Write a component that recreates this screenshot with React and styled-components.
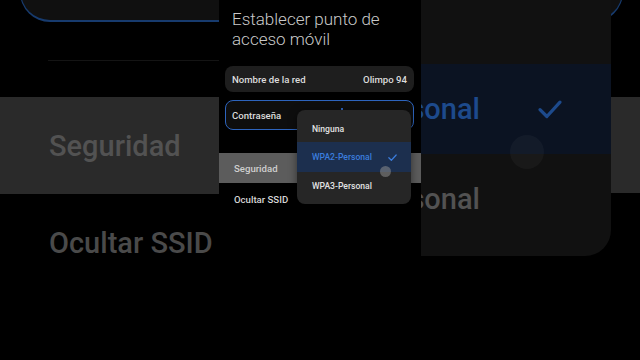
import React from 'react';
import styled, { createGlobalStyle } from 'styled-components';

const GlobalStyle = createGlobalStyle`
  html, body {
    margin: 0;
    padding: 0;
    background: #000;
  }
  body {
    font-family: Roboto, 'Noto Sans', sans-serif;
  }
`;

function Check({ size = 12, color = '#3b7ddd', stroke = 2 }) {
  return (
    <svg width={size} height={size} viewBox='0 0 24 24' fill='none'>
      <path
        d='M4 12.5l5.5 5.5L20 6.5'
        stroke={color}
        strokeWidth={stroke}
        strokeLinecap='round'
        strokeLinejoin='round'
      />
    </svg>
  );
}

const securityOptions = [
  { label: 'Ninguna', pos: 'first' },
  { label: 'WPA2-Personal', selected: true },
  { label: 'WPA3-Personal', pos: 'last' },
];

function App() {
  return (
    <>
      <GlobalStyle />
      <Page>
        {/* left: zoomed copy of the screen behind */}
        <Side>
          <OutlineLeft />
          <Divider />
          <BigBand>
            <BigLabel>Seguridad</BigLabel>
          </BigBand>
          <BigRow>
            <BigLabel $dim>Ocultar SSID</BigLabel>
          </BigRow>
        </Side>

        {/* center: the actual phone screen */}
        <Screen>
          <Title>
            Establecer punto de
            <br />
            acceso móvil
          </Title>
          <Field>
            <span>Nombre de la red</span>
            <span>Olimpo 94</span>
          </Field>
          <Field $active>
            <span>Contraseña</span>
            <Caret />
          </Field>
          <SettingRow $pressed>Seguridad</SettingRow>
          <SettingRow>Ocultar SSID</SettingRow>

          <Menu>
            {securityOptions.map((opt) => (
              <MenuItem key={opt.label} $selected={opt.selected} $pos={opt.pos}>
                <span>{opt.label}</span>
                {opt.selected && <Check size={11} stroke={2.6} />}
              </MenuItem>
            ))}
            <Touch />
          </Menu>
        </Screen>

        {/* right: zoomed copy of the dropdown */}
        <Side>
          <RightWrap>
            <ZoomMenu>
              <ZoomItem $selected>
                <Clip>
                  <ZoomText $selected>WPA2-Personal</ZoomText>
                </Clip>
                <ZoomCheck>
                  <Check size={30} color='#1d4a8c' stroke={2.6} />
                </ZoomCheck>
              </ZoomItem>
              <ZoomItem>
                <Clip>
                  <ZoomText>WPA3-Personal</ZoomText>
                </Clip>
              </ZoomItem>
              <BigTouch />
            </ZoomMenu>
            <Edge>
              <OutlineRight />
              <EdgeBand />
            </Edge>
          </RightWrap>
        </Side>
      </Page>
    </>
  );
}

const Page = styled.div`
  width: 640px;
  height: 360px;
  display: grid;
  grid-template-columns: 219px 202px 219px;
  background: #000;
  overflow: hidden;
`;

const Side = styled.div`
  display: flex;
  flex-direction: column;
  overflow: hidden;
  min-width: 0;
`;

const OutlineLeft = styled.div`
  margin: -20px -20px 0 20px;
  height: 40px;
  flex-shrink: 0;
  background: #101010;
  border-left: 1.5px solid #173b6e;
  border-bottom: 2px solid #173b6e;
  border-bottom-left-radius: 30px;
`;

const Divider = styled.div`
  margin: 38px 0 0 48px;
  height: 1px;
  background: #141414;
`;

const BigBand = styled.div`
  margin-top: 36px;
  height: 97px;
  background: #2a2a2a;
  display: flex;
  align-items: center;
  padding-left: 49px;
`;

const BigRow = styled.div`
  height: 98px;
  display: flex;
  align-items: center;
  padding-left: 49px;
`;

const BigLabel = styled.span`
  font-size: 29px;
  font-weight: 500;
  color: ${(p) => (p.$dim ? '#4a4a4a' : '#525252')};
  white-space: nowrap;
`;

const Screen = styled.div`
  position: relative;
  background: #000;
  display: flex;
  flex-direction: column;
`;

const Title = styled.div`
  margin: 9px 0 0 13px;
  font-size: 17px;
  line-height: 20px;
  font-weight: 300;
  color: #c9c9c9;
`;

const Field = styled.div`
  position: relative;
  margin: ${(p) => (p.$active ? '8px' : '17px')} 7px 0 6px;
  height: ${(p) => (p.$active ? '30px' : '26px')};
  box-sizing: border-box;
  display: flex;
  align-items: center;
  justify-content: space-between;
  padding: 0 ${(p) => (p.$active ? '6px' : '7px')};
  border-radius: 8px;
  background: ${(p) => (p.$active ? '#0e0e0e' : '#1e1e1e')};
  border: ${(p) => (p.$active ? '1.5px solid #2d64bd' : 'none')};
  font-size: 9.6px;
  font-weight: 500;
  color: #dcdcdc;
`;

const Caret = styled.div`
  position: absolute;
  left: 115px;
  top: 7px;
  width: 1.5px;
  height: 4px;
  background: #2d64bd;
`;

const SettingRow = styled.div`
  margin-top: ${(p) => (p.$pressed ? '23px' : '0')};
  height: ${(p) => (p.$pressed ? '30px' : '32px')};
  display: flex;
  align-items: center;
  padding-left: 15px;
  background: ${(p) => (p.$pressed ? '#5c5c5c' : 'transparent')};
  font-size: 9.6px;
  font-weight: 500;
  color: ${(p) => (p.$pressed ? '#cfcfcf' : '#d6d6d6')};
`;

const Menu = styled.div`
  position: absolute;
  left: 78px;
  top: 110px;
  width: 114px;
  padding: 6px 0 4px;
  box-sizing: border-box;
  background: #262626;
  border-radius: 8px;
  box-shadow: 0 2px 8px rgba(0, 0, 0, 0.5);
  display: flex;
  flex-direction: column;
`;

const MenuItem = styled.div`
  height: ${(p) => (p.$selected ? '30px' : p.$pos === 'first' ? '26px' : '28px')};
  display: flex;
  align-items: center;
  justify-content: space-between;
  padding: 0 13px 0 15px;
  background: ${(p) => (p.$selected ? '#1c2f4e' : 'transparent')};
  color: ${(p) => (p.$selected ? '#3b7ddd' : '#e2e2e2')};
  font-size: 8.6px;
  font-weight: 500;
`;

const Touch = styled.div`
  position: absolute;
  left: 83px;
  top: 56px;
  width: 11px;
  height: 11px;
  border-radius: 50%;
  background: rgba(140, 140, 140, 0.55);
`;

const RightWrap = styled.div`
  display: flex;
  height: 100%;
`;

const ZoomMenu = styled.div`
  position: relative;
  width: 190px;
  flex-shrink: 0;
  height: 256px;
  padding-top: 64px;
  box-sizing: border-box;
  background: #111111;
  border-bottom-right-radius: 26px;
  display: flex;
  flex-direction: column;
`;

const ZoomItem = styled.div`
  height: 90px;
  display: flex;
  align-items: center;
  background: ${(p) => (p.$selected ? '#0b1322' : 'transparent')};
`;

const Clip = styled.div`
  width: 59px;
  overflow: hidden;
  display: flex;
  justify-content: flex-end;
`;

const ZoomText = styled.span`
  font-size: 29px;
  font-weight: 500;
  white-space: nowrap;
  color: ${(p) => (p.$selected ? '#1d4a8c' : '#525252')};
`;

const ZoomCheck = styled.div`
  margin-left: 55px;
  display: flex;
`;

const BigTouch = styled.div`
  position: absolute;
  left: 89px;
  top: 135px;
  width: 34px;
  height: 34px;
  border-radius: 50%;
  background: rgba(255, 255, 255, 0.035);
`;

const Edge = styled.div`
  flex: 1;
  overflow: hidden;
  display: flex;
  flex-direction: column;
`;

const OutlineRight = styled.div`
  margin: -20px 0 0 -30px;
  width: 41px;
  height: 40px;
  flex-shrink: 0;
  background: #101010;
  border-right: 1.5px solid #173b6e;
  border-bottom: 2px solid #173b6e;
  border-bottom-right-radius: 30px;
`;

const EdgeBand = styled.div`
  margin-top: 75px;
  height: 96px;
  background: #2a2a2a;
`;

export default App;
